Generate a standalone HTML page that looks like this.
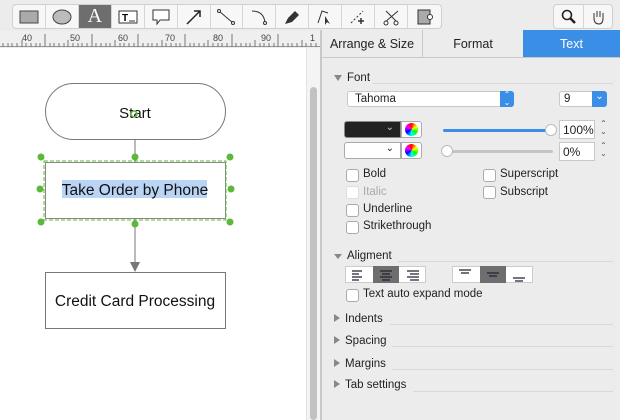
<!DOCTYPE html>
<html><head><style>
*{margin:0;padding:0;box-sizing:border-box}
body{width:620px;height:420px;overflow:hidden;background:#ececec;font-family:"Liberation Sans",sans-serif;position:relative;font-size:11.5px;color:#222}
.abs{position:absolute}
.tb{position:absolute;top:4px;height:25px;border:1px solid #cfcfcf;border-radius:4px;background:#f7f7f7;display:flex}
.tb div{width:34px;height:23px;border-right:1px solid #d6d6d6;display:flex;align-items:center;justify-content:center}
.tb div:last-child{border-right:none}
.cb{position:absolute;width:13px;height:13px;border:1px solid #aaa;border-radius:3px;background:#fff}
.lbl{position:absolute;font-size:11.5px}
.sec{position:absolute;left:334px;font-size:11.5px}
.line{position:absolute;height:1px;background:#d8d8d8}
.tri{display:inline-block;width:0;height:0;border-left:6px solid #888;border-top:4px solid transparent;border-bottom:4px solid transparent;margin-right:5px}
.trid{display:inline-block;width:0;height:0;border-top:6px solid #888;border-left:4px solid transparent;border-right:4px solid transparent;margin-right:5px}
</style></head><body>
<div class="tb" style="left:12px;width:430px">
<div><svg width="20" height="14"><rect x="1" y="1" width="18" height="12" fill="#aaa" stroke="#444"/></svg></div>
<div><svg width="20" height="16"><ellipse cx="10" cy="8" rx="9" ry="7" fill="#bbb" stroke="#444"/></svg></div>
<div style="background:#6e6e6e;color:#fff;font-family:'Liberation Serif',serif;font-size:20px">A</div>
<div><svg width="20" height="14"><rect x="1" y="1" width="18" height="12" fill="#fff" stroke="#333"/><text x="4" y="11" font-size="10" font-family="Liberation Sans" font-weight="bold">T</text><line x1="11" y1="11" x2="17" y2="11" stroke="#333"/></svg></div>
<div><svg width="20" height="18"><path d="M2 2H18V12H9L6 16V12H2Z" fill="#fff" stroke="#333"/></svg></div>
<div><svg width="20" height="18"><path d="M3 16L16 3M10 3H16V9" fill="none" stroke="#222" stroke-width="1.5"/></svg></div>
<div><svg width="20" height="18"><path d="M3 3L17 15" stroke="#333"/><circle cx="3" cy="3" r="1.5" fill="#fff" stroke="#333"/><circle cx="17" cy="15" r="1.5" fill="#fff" stroke="#333"/></svg></div>
<div><svg width="20" height="18"><path d="M3 3Q15 3 16 15" fill="none" stroke="#333"/><circle cx="16" cy="15" r="1.5" fill="#fff" stroke="#333"/></svg></div>
<div><svg width="20" height="18"><path d="M3 16L6 10L13 3L17 7L10 14Z" fill="#333"/></svg></div>
<div><svg width="20" height="18"><path d="M3 15L7 3L13 5" fill="none" stroke="#333"/><path d="M10 8L10 17L12 14L15 16Z" fill="#333"/></svg></div>
<div><svg width="20" height="18"><path d="M3 15L15 3" stroke="#333" stroke-dasharray="2 2"/><path d="M13 10V16M10 13H16" stroke="#333" stroke-width="1.5"/></svg></div>
<div><svg width="20" height="18"><path d="M3 15L17 3M5 3L17 15" stroke="#333"/><circle cx="5" cy="15" r="2" fill="#fff" stroke="#333"/><circle cx="15" cy="15" r="2" fill="#fff" stroke="#333"/></svg></div>
<div><svg width="20" height="18"><rect x="3" y="2" width="12" height="14" fill="#aaa" stroke="#333"/><circle cx="15" cy="9" r="2.5" fill="#fff" stroke="#333"/></svg></div>
</div>
<div class="tb" style="left:553px;width:60px"><div style="width:30px"><svg width="16" height="16"><circle cx="6" cy="6" r="4.5" fill="none" stroke="#222" stroke-width="1.6"/><path d="M9 9L14 14" stroke="#222" stroke-width="2.5"/></svg></div><div style="width:28px"><svg width="16" height="18"><path d="M4 10V5M7 9V3M10 9V3M13 10V5M4 10Q4 16 9 16Q13 16 13 10" fill="none" stroke="#333"/></svg></div></div>
<div class="abs" style="left:0;top:31px;width:320px;height:16px;background:#efefef;border-bottom:1px solid #999"></div>
<svg class="abs" style="left:0;top:31px" width="320" height="16">
<g stroke="#777" stroke-width="1">
<path d="M3 16V12M8 16V12M12 16V12M17 16V12M22 16V9M26 16V12M31 16V12M36 16V12M40 16V12M45 16V3M50 16V12M54 16V12M59 16V12M64 16V12M68 16V9M73 16V12M78 16V12M82 16V12M87 16V12M92 16V3M96 16V12M101 16V12M106 16V12M110 16V12M115 16V9M120 16V12M124 16V12M129 16V12M134 16V12M138 16V3M143 16V12M148 16V12M152 16V12M157 16V12M162 16V9M166 16V12M171 16V12M176 16V12M180 16V12M185 16V3M190 16V12M194 16V12M199 16V12M204 16V12M208 16V9M213 16V12M218 16V12M222 16V12M227 16V12M232 16V3M236 16V12M241 16V12M246 16V12M250 16V12M255 16V9M260 16V12M264 16V12M269 16V12M274 16V12M278 16V3M283 16V12M288 16V12M292 16V12M297 16V12M302 16V9M306 16V12M311 16V12M316 16V12"/>
</g>
<g font-size="9" fill="#444" font-family="Liberation Sans"><text x="22" y="10">40</text><text x="70" y="10">50</text><text x="118" y="10">60</text><text x="165" y="10">70</text><text x="213" y="10">80</text><text x="261" y="10">90</text><text x="310" y="10">1</text></g>
</svg>
<div class="abs" style="left:0;top:48px;width:306px;height:372px;background:#fff"></div>
<div class="abs" style="left:306px;top:48px;width:14px;height:372px;background:#f4f4f4;border-left:1px solid #e2e2e2"></div>
<div class="abs" style="left:310px;top:87px;width:7px;height:333px;background:#c2c2c2;border-radius:4px"></div>
<svg class="abs" style="left:0;top:48px" width="306" height="372">
<rect x="45.5" y="35.5" width="180" height="56" rx="28" fill="#fff" stroke="#777"/>
<text x="135" y="70" text-anchor="middle" font-size="15" font-family="Liberation Sans" fill="#111">Start</text>
<circle cx="134" cy="66" r="3" fill="none" stroke="#5cb83a" stroke-width="1.5"/>
<line x1="135" y1="91" x2="135" y2="114" stroke="#777"/>
<rect x="45.5" y="114.5" width="180" height="56" fill="#fff" stroke="#888"/>
<rect x="44" y="113" width="182" height="59" fill="none" stroke="#5cb83a" stroke-dasharray="4 2"/>
<rect x="62" y="132" width="145" height="18" fill="#b9d4f5"/>
<text x="135" y="147" text-anchor="middle" font-size="15.5" font-family="Liberation Sans" fill="#111">Take Order by Phone</text>
<line x1="135" y1="171" x2="135" y2="216" stroke="#777"/>
<path d="M130 214L135 224L140 214Z" fill="#777"/>
<rect x="45.5" y="224.5" width="180" height="56" fill="#fff" stroke="#777"/>
<text x="135" y="258" text-anchor="middle" font-size="15.5" font-family="Liberation Sans" fill="#111">Credit Card Processing</text>
<g fill="#5cb83a"><circle cx="41" cy="109" r="3.5"/><circle cx="135" cy="109" r="3.5"/><circle cx="230" cy="109" r="3.5"/><circle cx="40" cy="141" r="3.5"/><circle cx="231" cy="141" r="3.5"/><circle cx="41" cy="174" r="3.5"/><circle cx="135" cy="176" r="3.5"/><circle cx="230" cy="174" r="3.5"/></g>
</svg>
<div class="abs" style="left:320px;top:30px;width:2px;height:390px;background:#c8c8c8"></div>
<div class="abs" style="left:322px;top:30px;width:298px;height:28px;border-bottom:1px solid #c8c8c8;display:flex;font-size:12.5px">
<div style="width:101px;display:flex;align-items:center;justify-content:center;border-right:1px solid #c8c8c8">Arrange &amp; Size</div>
<div style="width:100px;display:flex;align-items:center;justify-content:center">Format</div>
<div style="width:97px;display:flex;align-items:center;justify-content:center;background:#3a8ee6;color:#fff">Text</div></div>
<div class="sec" style="top:72px"><span class="trid"></span>Font</div>
<div class="line" style="left:373px;top:83px;width:240px"></div>
<div class="abs" style="left:347px;top:91px;width:167px;height:16px;background:#fff;border:1px solid #c8c8c8;border-radius:3px;font-size:11.5px;padding:1px 0 0 7px">Tahoma</div>
<div class="abs" style="left:500px;top:91px;width:14px;height:16px;background:#3a8ee6;border-radius:0 3px 3px 0;color:#fff;font-size:8px;text-align:center;line-height:8px">⌃<br>⌄</div>
<div class="abs" style="left:559px;top:91px;width:47px;height:16px;background:#fff;border:1px solid #c8c8c8;border-radius:3px;padding:1px 0 0 4px">9</div>
<div class="abs" style="left:592px;top:91px;width:15px;height:16px;background:#3a8ee6;border-radius:0 3px 3px 0;color:#fff;text-align:center;font-size:10px">⌄</div>
<div class="abs" style="left:344px;top:121px;width:57px;height:17px;background:#222;border:1px solid #888;border-radius:3px 0 0 3px;color:#ccc;text-align:right;padding-right:6px;font-size:10px">⌄</div>
<div class="abs" style="left:344px;top:142px;width:57px;height:17px;background:#fff;border:1px solid #aaa;border-radius:3px 0 0 3px;text-align:right;padding-right:6px;font-size:10px">⌄</div>
<div class="abs" style="left:401px;top:121px;width:21px;height:17px;background:#fff;border:1px solid #aaa;border-radius:0 3px 3px 0"></div>
<div class="abs" style="left:401px;top:142px;width:21px;height:17px;background:#fff;border:1px solid #aaa;border-radius:0 3px 3px 0"></div>
<div class="abs" style="left:405px;top:123px;width:13px;height:13px;border-radius:50%;background:conic-gradient(red,yellow,lime,cyan,blue,magenta,red)"></div>
<div class="abs" style="left:405px;top:144px;width:13px;height:13px;border-radius:50%;background:conic-gradient(red,yellow,lime,cyan,blue,magenta,red)"></div>
<div class="abs" style="left:443px;top:129px;width:110px;height:3px;background:#3a8ee6;border-radius:2px"></div>
<div class="abs" style="left:545px;top:124px;width:12px;height:12px;border-radius:50%;background:#fff;border:1px solid #bbb"></div>
<div class="abs" style="left:443px;top:150px;width:110px;height:3px;background:#c4c4c4;border-radius:2px"></div>
<div class="abs" style="left:441px;top:145px;width:12px;height:12px;border-radius:50%;background:#fff;border:1px solid #bbb"></div>
<div class="abs" style="left:559px;top:120px;width:36px;height:19px;background:#fff;border:1px solid #c8c8c8;padding:2px 0 0 3px;font-size:12px">100%</div>
<div class="abs" style="left:559px;top:142px;width:36px;height:19px;background:#fff;border:1px solid #c8c8c8;padding:2px 0 0 3px;font-size:12px">0%</div>
<div class="abs" style="left:598px;top:120px;width:11px;height:19px;font-size:8px;line-height:8px;color:#555;text-align:center">⌃<br>⌄</div>
<div class="abs" style="left:598px;top:142px;width:11px;height:19px;font-size:8px;line-height:8px;color:#555;text-align:center">⌃<br>⌄</div>
<div class="cb" style="left:346px;top:169px"></div><div class="lbl" style="left:363px;top:168px">Bold</div>
<div class="cb" style="left:346px;top:186px;border-color:#ddd"></div><div class="lbl" style="left:363px;top:186px;color:#aaa">Italic</div>
<div class="cb" style="left:346px;top:204px"></div><div class="lbl" style="left:363px;top:203px">Underline</div>
<div class="cb" style="left:346px;top:221px"></div><div class="lbl" style="left:363px;top:220px">Strikethrough</div>
<div class="cb" style="left:483px;top:169px"></div><div class="lbl" style="left:500px;top:168px">Superscript</div>
<div class="cb" style="left:483px;top:186px"></div><div class="lbl" style="left:500px;top:186px">Subscript</div>
<div class="sec" style="top:250px"><span class="trid" style="border-top-width:5px"></span>Aligment</div>
<div class="line" style="left:398px;top:261px;width:215px"></div>
<svg class="abs" style="left:345px;top:266px" width="190" height="18">
<rect x="0.5" y="0.5" width="80" height="16" fill="#fff" stroke="#ccc"/><rect x="28" y="0" width="26" height="17" fill="#6e6e6e"/>
<g stroke="#223" stroke-width="1.2"><path d="M7 5H17M7 8H14M7 11H17M7 14H14"/><path d="M35 5H47M37 8H45M35 11H47M37 14H45"/><path d="M62 5H74M65 8H74M62 11H74M65 14H74"/></g>
<rect x="107.5" y="0.5" width="80" height="16" fill="#fff" stroke="#ccc"/><rect x="135" y="0" width="26" height="17" fill="#6e6e6e"/>
<g stroke="#223" stroke-width="1.2"><path d="M114 4H126M116 7H124"/><path d="M142 7H154M144 10H152"/><path d="M168 12H180M170 15H178"/></g>
</svg>
<div class="cb" style="left:346px;top:289px"></div><div class="lbl" style="left:363px;top:288px">Text auto expand mode</div>
<div class="sec" style="top:313px"><span class="tri"></span>Indents</div><div class="line" style="left:390px;top:324px;width:223px"></div>
<div class="sec" style="top:335px"><span class="tri"></span>Spacing</div><div class="line" style="left:392px;top:346px;width:221px"></div>
<div class="sec" style="top:358px"><span class="tri"></span>Margins</div><div class="line" style="left:392px;top:369px;width:221px"></div>
<div class="sec" style="top:379px"><span class="tri"></span>Tab settings</div><div class="line" style="left:413px;top:391px;width:200px"></div>
</body></html>
